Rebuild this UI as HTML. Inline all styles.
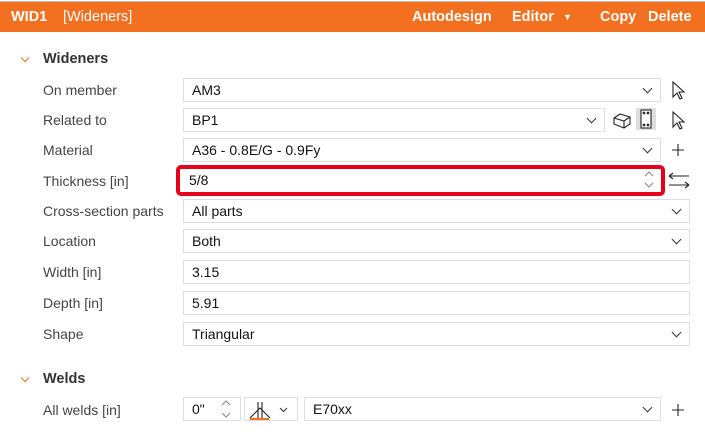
<!DOCTYPE html><html><head><style>
*{box-sizing:border-box;margin:0;padding:0}
body{width:705px;height:442px;background:#fff;font-family:"Liberation Sans",sans-serif;font-size:14px;color:#222;position:relative;overflow:hidden}
.hd{position:absolute;left:0;top:1px;width:705px;height:31px;background:#f37021;color:#fff;border-top:1px solid #bbb}
.hd span{position:absolute;top:7px;font-size:14.5px}
.b{font-weight:bold}
.lbl{position:absolute;left:43px;color:#444;font-size:14px}
.sec{position:absolute;left:43px;font-weight:bold;color:#333;font-size:14.5px}
.chev{position:absolute;left:22px;width:6px;height:6px;border-right:1.2px solid #f37021;border-bottom:1.2px solid #f37021;transform:rotate(45deg)}
.box{position:absolute;height:24px;border:1px solid #ddd;background:#fff;padding-left:8px;line-height:22px;font-size:14px;color:#111}
.dd::after{content:"";position:absolute;right:9px;top:6px;width:6px;height:6px;border-right:1.2px solid #333;border-bottom:1.2px solid #333;transform:rotate(45deg)}
.ic{position:absolute}
</style></head><body>
<div class="hd">
<span class="b" style="left:11px">WID1</span><span style="left:63px">[Wideners]</span>
<span class="b" style="left:412px">Autodesign</span><span class="b" style="left:512px">Editor</span>
<span style="left:563px;font-size:9px;top:10px">▼</span>
<span class="b" style="left:600px">Copy</span><span class="b" style="left:648px">Delete</span>
</div>
<div class="chev" style="top:55px"></div><div class="sec" style="top:51px">Wideners</div>
<div class="lbl" style="top:82px">On member</div><div class="box dd" style="left:183px;top:78px;width:478px">AM3</div>
<div class="lbl" style="top:112px">Related to</div><div class="box dd" style="left:183px;top:108px;width:422px">BP1</div>
<div class="lbl" style="top:142px">Material</div><div class="box dd" style="left:183px;top:138px;width:478px">A36 - 0.8E/G - 0.9Fy</div>
<div class="lbl" style="top:173px">Thickness [in]</div>
<div class="box" style="left:176px;top:165px;width:489px;height:31px;border:4px solid #e4001b;border-radius:5px;padding-left:9px;line-height:23px">5/8</div>
<div class="lbl" style="top:203px">Cross-section parts</div><div class="box dd" style="left:183px;top:199px;width:507px">All parts</div>
<div class="lbl" style="top:233px">Location</div><div class="box dd" style="left:183px;top:229px;width:507px">Both</div>
<div class="lbl" style="top:264px">Width [in]</div><div class="box" style="left:183px;top:260px;width:507px">3.15</div>
<div class="lbl" style="top:295px">Depth [in]</div><div class="box" style="left:183px;top:291px;width:507px">5.91</div>
<div class="lbl" style="top:326px">Shape</div><div class="box dd" style="left:183px;top:322px;width:507px">Triangular</div>
<div class="chev" style="top:375px"></div><div class="sec" style="top:371px">Welds</div>
<div class="lbl" style="top:402px">All welds [in]</div>
<div class="box" style="left:183px;top:397px;width:58px">0"</div>
<div class="box" style="left:244px;top:397px;width:54px"></div>
<div class="box dd" style="left:304px;top:397px;width:357px">E70xx</div>
<svg class="ic" width="705" height="442" style="left:0;top:0" fill="none" stroke="#222" stroke-width="1.1">
<path d="M673 82 L673 97 L677 93 L680 99 L682 98 L679 92 L684 92 Z"/>
<path d="M673 112 L673 127 L677 123 L680 129 L682 128 L679 122 L684 122 Z"/>
<path d="M614 118 L620 114 L630 117 L630 124 L624 128 L614 124 Z M614 118 L624 121 L630 117 M624 121 L624 128"/>
<rect x="636" y="108" width="20" height="22" fill="#ddd" stroke="none"/>
<rect x="641" y="110" width="10" height="18" fill="#fff"/>
<circle cx="644" cy="113" r=".8"/><circle cx="648" cy="113" r=".8"/><circle cx="644" cy="125" r=".8"/><circle cx="648" cy="125" r=".8"/>
<path d="M672 150 H684 M678 144 V156"/>
<path d="M672 410 H684 M678 404 V416"/>
<path d="M669 176 H689 M669 176 l4 -3 M669 176 l4 3 M669 185 H689 M689 185 l-4 -3 M689 185 l-4 3"/>
<path d="M645 176 l4 -4 l4 4 M645 183 l4 4 l4 -4" stroke="#888"/>
<path d="M222 405 l4 -4 l4 4 M222 413 l4 4 l4 -4" stroke="#888"/>
<path d="M258 402 V418 M262 402 V418 M250 418 L260 408 L270 418"/>
<path d="M250 419 H269" stroke="#f37021" stroke-width="2"/>
<path d="M280 408 l3.5 3.5 l3.5 -3.5" stroke="#333"/>
</svg>
</body></html>
